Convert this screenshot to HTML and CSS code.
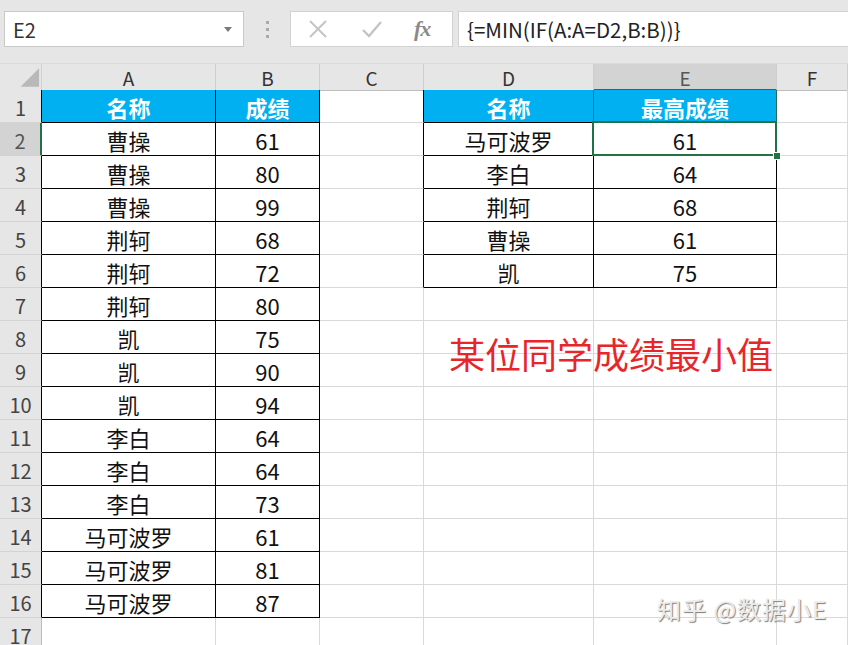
FILE: index.html
```html
<!DOCTYPE html>
<html lang="zh">
<head>
<meta charset="utf-8">
<title>Excel</title>
<link rel="stylesheet" href="styles.css">
</head>
<body>
<div class="app">
  <div class="toolbar">
    <div class="namebox">
      <span class="name">E2</span>
      <svg class="drop" width="8" height="5" viewBox="0 0 8 5"><path d="M0 0h8L4 5z" fill="#7a7a7a"/></svg>
    </div>
    <div class="grip"><i></i><i></i><i></i></div>
    <div class="fbtns">
      <svg class="ico" width="20" height="20" viewBox="0 0 20 20"><path d="M2 2L18 18M18 2L2 18" stroke="#c4c4c4" stroke-width="2" fill="none"/></svg>
      <svg class="ico" width="22" height="20" viewBox="0 0 22 20"><path d="M2 11L8 17L20 3" stroke="#c4c4c4" stroke-width="2.4" fill="none"/></svg>
      <span class="fx">fx</span>
    </div>
    <div class="finput">{=MIN(IF(A:A=D2,B:B))}</div>
  </div>

  <div class="sheet">
    <div class="row head">
      <div class="corner"><svg width="42" height="26" viewBox="0 0 42 26"><path d="M40 4V23H21z" fill="#b9b9b9"/></svg></div>
      <div class="ch">A</div><div class="ch">B</div><div class="ch">C</div><div class="ch">D</div><div class="ch sel">E</div><div class="ch">F</div>
    </div>
    <div class="row"><div class="rh tb">1</div><div class="c t h">名称</div><div class="c t h">成绩</div><div class="c bl"></div><div class="c t h gr">名称</div><div class="c t h gr">最高成绩</div><div class="c"></div></div>
    <div class="row"><div class="rh sel">2</div><div class="c t">曹操</div><div class="c t">61</div><div class="c bl"></div><div class="c t">马可波罗</div><div class="c t cur">61</div><div class="c"></div></div>
    <div class="row"><div class="rh tb">3</div><div class="c t">曹操</div><div class="c t">80</div><div class="c bl"></div><div class="c t">李白</div><div class="c t">64</div><div class="c"></div></div>
    <div class="row"><div class="rh tb">4</div><div class="c t">曹操</div><div class="c t">99</div><div class="c bl"></div><div class="c t">荆轲</div><div class="c t">68</div><div class="c"></div></div>
    <div class="row"><div class="rh tb">5</div><div class="c t">荆轲</div><div class="c t">68</div><div class="c bl"></div><div class="c t">曹操</div><div class="c t">61</div><div class="c"></div></div>
    <div class="row"><div class="rh tb">6</div><div class="c t">荆轲</div><div class="c t">72</div><div class="c bl"></div><div class="c t">凯</div><div class="c t">75</div><div class="c"></div></div>
    <div class="row"><div class="rh tb">7</div><div class="c t">荆轲</div><div class="c t">80</div><div class="c"></div><div class="c"></div><div class="c"></div><div class="c"></div></div>
    <div class="row"><div class="rh tb">8</div><div class="c t">凯</div><div class="c t">75</div><div class="c"></div><div class="c"></div><div class="c"></div><div class="c"></div></div>
    <div class="row"><div class="rh tb">9</div><div class="c t">凯</div><div class="c t">90</div><div class="c"></div><div class="c"></div><div class="c"></div><div class="c"></div></div>
    <div class="row"><div class="rh tb">10</div><div class="c t">凯</div><div class="c t">94</div><div class="c"></div><div class="c"></div><div class="c"></div><div class="c"></div></div>
    <div class="row"><div class="rh tb">11</div><div class="c t">李白</div><div class="c t">64</div><div class="c"></div><div class="c"></div><div class="c"></div><div class="c"></div></div>
    <div class="row"><div class="rh tb">12</div><div class="c t">李白</div><div class="c t">64</div><div class="c"></div><div class="c"></div><div class="c"></div><div class="c"></div></div>
    <div class="row"><div class="rh tb">13</div><div class="c t">李白</div><div class="c t">73</div><div class="c"></div><div class="c"></div><div class="c"></div><div class="c"></div></div>
    <div class="row"><div class="rh tb">14</div><div class="c t">马可波罗</div><div class="c t">61</div><div class="c"></div><div class="c"></div><div class="c"></div><div class="c"></div></div>
    <div class="row"><div class="rh tb">15</div><div class="c t">马可波罗</div><div class="c t">81</div><div class="c"></div><div class="c"></div><div class="c"></div><div class="c"></div></div>
    <div class="row"><div class="rh tb">16</div><div class="c t">马可波罗</div><div class="c t">87</div><div class="c"></div><div class="c"></div><div class="c"></div><div class="c"></div></div>
    <div class="row"><div class="rh">17</div><div class="c"></div><div class="c"></div><div class="c"></div><div class="c"></div><div class="c"></div><div class="c"></div></div>
  </div>

  <div class="note">某位同学成绩最小值</div>
  <div class="mark">知乎 @数据小E</div>
</div>
</body>
</html>
```

FILE: styles.css
```css
html, body {
  margin: 0;
  padding: 0;
  background: #ffffff;
}
.app {
  position: relative;
  width: 848px;
  height: 645px;
  overflow: hidden;
  font-family: "Noto Sans CJK SC", "Noto Sans", sans-serif;
  color: #000;
}
.toolbar {
  height: 64px;
  box-sizing: border-box;
  background: #e6e6e6;
  display: flex;
  align-items: flex-start;
  padding: 11px 0 0 4px;
  border-bottom: 1px solid #dadada;
}
.namebox {
  width: 240px;
  height: 36px;
  box-sizing: border-box;
  background: #fff;
  border: 1px solid #c9c9c9;
  display: flex;
  align-items: center;
  justify-content: space-between;
  padding: 0 11px 0 8px;
}
.name {
  font-size: 20px;
  color: #333;
}
.grip {
  width: 46px;
  height: 36px;
  display: flex;
  flex-direction: column;
  align-items: center;
  justify-content: center;
  gap: 4px;
}
.grip i {
  display: block;
  width: 3px;
  height: 3px;
  background: #a9a9a9;
}
.fbtns {
  width: 163px;
  height: 36px;
  box-sizing: border-box;
  background: #fff;
  border: 1px solid #d2d2d2;
  display: flex;
  align-items: center;
  padding-left: 17px;
}
.fbtns .ico:first-child { margin-right: 33px; }
.fbtns .ico:nth-child(2) { margin-right: 31px; }
.fx {
  font-family: "Liberation Serif", serif;
  font-style: italic;
  font-weight: bold;
  font-size: 22px;
  color: #8a8a8a;
  letter-spacing: -1px;
}
.finput {
  flex: 1;
  margin-left: 5px;
  height: 36px;
  box-sizing: border-box;
  background: #fff;
  border: 1px solid #d2d2d2;
  border-right: none;
  display: flex;
  align-items: center;
  padding-left: 8px;
  font-size: 20.5px;
  color: #222;
}
.sheet {
  display: flex;
  flex-direction: column;
}
.row {
  display: grid;
  grid-template-columns: 42px 174px 104px 104px 170px 183px 71px;
  height: 33px;
}
.row.head {
  height: 26px;
  background: #e6e6e6;
}
.corner {
  border-right: 1px solid #d0d0d0;
  border-bottom: 1px solid #bdbdbd;
  box-sizing: border-box;
  display: flex;
}
.ch {
  box-sizing: border-box;
  border-right: 1px solid #cfcfcf;
  border-bottom: 1px solid #bdbdbd;
  display: flex;
  align-items: center;
  justify-content: center;
  font-size: 19px;
  color: #333;
  line-height: 1;
  padding-top: 1px;
}
.ch.sel {
  background: #d3d3d3;
  border-bottom: 2px solid #217346;
  color: #555;
}
.rh {
  box-sizing: border-box;
  background: #e6e6e6;
  border-right: 1px solid #bdbdbd;
  border-bottom: 1px solid #d3d3d3;
  display: flex;
  align-items: flex-end;
  justify-content: center;
  font-size: 20px;
  line-height: 20px;
  padding-bottom: 4px;
  color: #444;
}
.rh.tb { border-right-color: #000; }
.rh.sel {
  background: #d3d3d3;
  border-right: 2px solid #217346;
  color: #555;
}
.c {
  box-sizing: border-box;
  border-right: 1px solid #d9d9d9;
  border-bottom: 1px solid #d9d9d9;
  display: flex;
  align-items: center;
  justify-content: center;
  font-size: 22px;
  line-height: 1;
  padding-top: 1px;
  color: #111;
}
.c.t {
  border-right-color: #000;
  border-bottom-color: #000;
}
.c.bl { border-right-color: #000; }
.c.h {
  background: #00b0f0;
  color: #fff;
  font-weight: bold;
}
.c.gr { border-right-color: #2a6b55; }
.c.cur { position: relative; }
.c.cur::before {
  content: "";
  position: absolute;
  left: -2px;
  top: -2px;
  right: -1px;
  bottom: -1px;
  border: 2px solid #217346;
  z-index: 2;
}
.c.cur::after {
  content: "";
  position: absolute;
  right: -5px;
  bottom: -5px;
  width: 6px;
  height: 6px;
  background: #217346;
  border: 1px solid #fff;
  z-index: 3;
}
.note {
  position: absolute;
  left: 449px;
  top: 333px;
  font-size: 36px;
  line-height: 40px;
  color: #e8262a;
  white-space: nowrap;
}
.mark {
  position: absolute;
  left: 657px;
  top: 595px;
  font-size: 24px;
  line-height: 28px;
  color: #ececec;
  text-shadow: 1px 1px 1px #7d7d7d;
  white-space: nowrap;
  letter-spacing: 1px;
}
```
